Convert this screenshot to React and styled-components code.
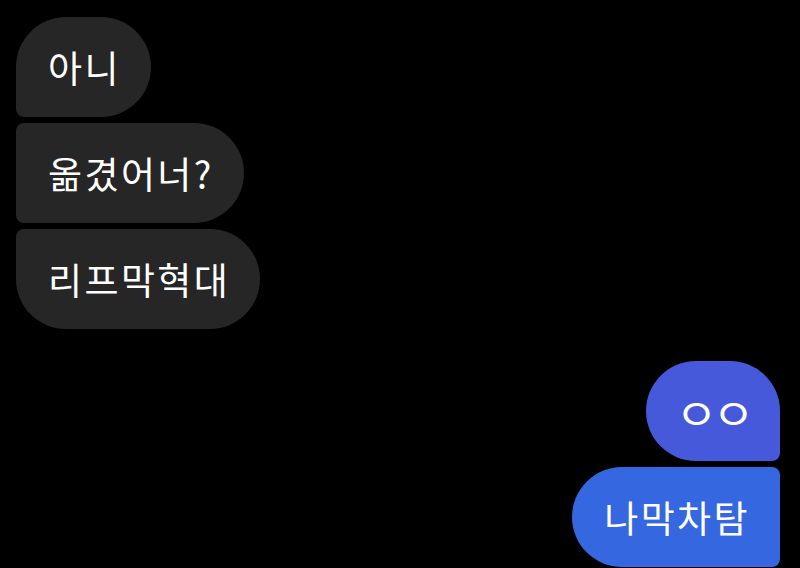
import React from 'react';
import styled, { createGlobalStyle, css } from 'styled-components';

const GlobalStyle = createGlobalStyle`
  html, body {
    margin: 0;
    padding: 0;
    background: #000;
    overflow: hidden;
  }
`;

const messages = [
  { id: 1, mine: false, text: '아니' },
  { id: 2, mine: false, text: '옮겼어너?' },
  { id: 3, mine: false, text: '리프막혁대' },
  { id: 4, mine: true, text: 'ㅇㅇ', jamo: true },
  { id: 5, mine: true, text: '나막차탐' },
];

function groupMessages(list) {
  const groups = [];
  list.forEach(msg => {
    const last = groups[groups.length - 1];
    if (last && last.mine === msg.mine) last.items.push(msg);
    else groups.push({ mine: msg.mine, items: [msg] });
  });
  return groups;
}

function App() {
  const groups = groupMessages(messages);

  return (
    <>
      <GlobalStyle />
      <Screen>
        {groups.map((group, gi) => (
          <Group key={gi} mine={group.mine}>
            {group.items.map((msg, idx) => (
              <Bubble
                key={msg.id}
                mine={msg.mine}
                first={idx === 0}
                last={idx === group.items.length - 1}>
                {msg.jamo ? (
                  <JamoRow>
                    {[...msg.text].map((ch, i) => (
                      <JamoChar key={i}>{ch}</JamoChar>
                    ))}
                  </JamoRow>
                ) : (
                  msg.text
                )}
              </Bubble>
            ))}
          </Group>
        ))}
      </Screen>
    </>
  );
}

const Screen = styled.div`
  width: 800px;
  height: 568px;
  box-sizing: border-box;
  padding: 17px 20px 0 16px;
  display: flex;
  flex-direction: column;
  gap: 32px;
  background: #000;
`;

const Group = styled.div`
  display: flex;
  flex-direction: column;
  align-items: ${({ mine }) => (mine ? 'flex-end' : 'flex-start')};
  gap: 6px;
`;

const BIG = '50px';
const SMALL = '8px';

const Bubble = styled.div`
  height: 100px;
  box-sizing: border-box;
  padding: 0 30px 0 32px;
  display: flex;
  align-items: center;
  color: #fff;
  font-family: 'Noto Sans CJK KR', 'Noto Sans', sans-serif;
  font-size: 37px;
  font-weight: 400;
  letter-spacing: 2.4px;
  white-space: nowrap;

  ${({ mine, first, last }) =>
    mine
      ? css`
          background: ${first ? '#4659da' : '#3567e0'};
          border-radius: ${BIG} ${first ? BIG : SMALL} ${SMALL} ${BIG};
        `
      : css`
          background: #262626;
          border-radius: ${first ? BIG : SMALL} ${BIG} ${BIG}
            ${last ? BIG : SMALL};
        `}
`;

// the phone's font draws slightly wider circles for ㅇ
const JamoRow = styled.span`
  display: inline-flex;
  margin-left: -1px;
  letter-spacing: 0;
`;

const JamoChar = styled.span`
  display: inline-block;
  width: 36.5px;
  text-align: center;
  font-size: 42px;
  transform: scaleX(1.1);
`;

export default App;
